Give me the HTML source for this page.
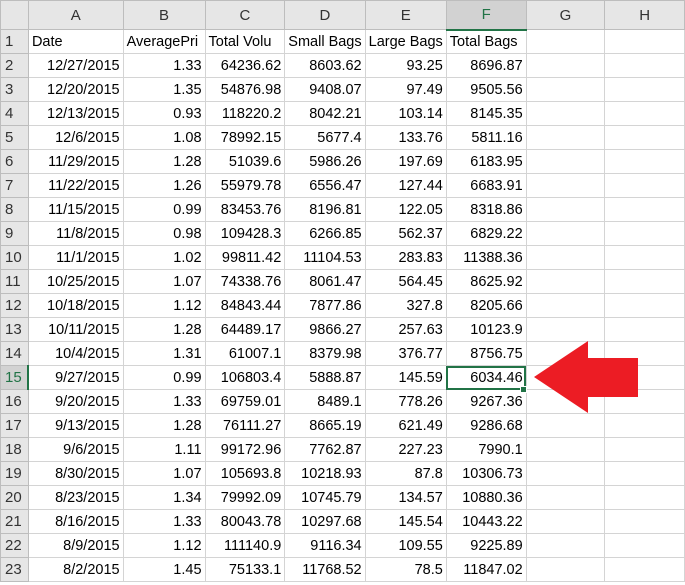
<!DOCTYPE html>
<html><head><meta charset="utf-8"><style>
body{margin:0;width:685px;height:585px;overflow:hidden;background:#fff;font-family:"Liberation Sans",Arial,sans-serif;position:relative}
table{border-collapse:collapse;table-layout:fixed;position:absolute;left:0;top:0}
td{border:1px solid #d4d4d4;height:24px;padding:0 3px;font-size:14.5px;color:#000;white-space:nowrap;overflow:hidden;text-align:right;box-sizing:border-box}
tr{height:24px}
td.l{text-align:left}
tr.h{height:29px}
tr.h td{height:29px;background:#e6e6e6;text-align:center;color:#333;font-size:15px;border-color:#bdbdbd}
td.r{background:#e6e6e6;text-align:left;padding-left:4px;color:#333;font-size:15px;border-color:#bdbdbd}
tr.h td.sel{background:#d2d2d2;color:#217346;border-bottom:2px solid #217346}
td.rsel{background:#d2d2d2;color:#217346;border-right:2px solid #217346}
td.cs{outline:2px solid #217346;outline-offset:-2px}
</style></head><body>
<table>
<colgroup><col style="width:28px"><col style="width:95px"><col style="width:82px"><col style="width:80px"><col style="width:80px"><col style="width:79px"><col style="width:80px"><col style="width:80px"><col style="width:81px"></colgroup>
<tr class="h"><td></td><td>A</td><td>B</td><td>C</td><td>D</td><td>E</td><td class="sel">F</td><td>G</td><td>H</td></tr>
<tr><td class="r">1</td><td class="l">Date</td><td class="l">AveragePri</td><td class="l">Total Volu</td><td class="l">Small Bags</td><td class="l">Large Bags</td><td class="l">Total Bags</td><td></td><td></td></tr>
<tr><td class="r">2</td><td>12/27/2015</td><td>1.33</td><td>64236.62</td><td>8603.62</td><td>93.25</td><td>8696.87</td><td></td><td></td></tr>
<tr><td class="r">3</td><td>12/20/2015</td><td>1.35</td><td>54876.98</td><td>9408.07</td><td>97.49</td><td>9505.56</td><td></td><td></td></tr>
<tr><td class="r">4</td><td>12/13/2015</td><td>0.93</td><td>118220.2</td><td>8042.21</td><td>103.14</td><td>8145.35</td><td></td><td></td></tr>
<tr><td class="r">5</td><td>12/6/2015</td><td>1.08</td><td>78992.15</td><td>5677.4</td><td>133.76</td><td>5811.16</td><td></td><td></td></tr>
<tr><td class="r">6</td><td>11/29/2015</td><td>1.28</td><td>51039.6</td><td>5986.26</td><td>197.69</td><td>6183.95</td><td></td><td></td></tr>
<tr><td class="r">7</td><td>11/22/2015</td><td>1.26</td><td>55979.78</td><td>6556.47</td><td>127.44</td><td>6683.91</td><td></td><td></td></tr>
<tr><td class="r">8</td><td>11/15/2015</td><td>0.99</td><td>83453.76</td><td>8196.81</td><td>122.05</td><td>8318.86</td><td></td><td></td></tr>
<tr><td class="r">9</td><td>11/8/2015</td><td>0.98</td><td>109428.3</td><td>6266.85</td><td>562.37</td><td>6829.22</td><td></td><td></td></tr>
<tr><td class="r">10</td><td>11/1/2015</td><td>1.02</td><td>99811.42</td><td>11104.53</td><td>283.83</td><td>11388.36</td><td></td><td></td></tr>
<tr><td class="r">11</td><td>10/25/2015</td><td>1.07</td><td>74338.76</td><td>8061.47</td><td>564.45</td><td>8625.92</td><td></td><td></td></tr>
<tr><td class="r">12</td><td>10/18/2015</td><td>1.12</td><td>84843.44</td><td>7877.86</td><td>327.8</td><td>8205.66</td><td></td><td></td></tr>
<tr><td class="r">13</td><td>10/11/2015</td><td>1.28</td><td>64489.17</td><td>9866.27</td><td>257.63</td><td>10123.9</td><td></td><td></td></tr>
<tr><td class="r">14</td><td>10/4/2015</td><td>1.31</td><td>61007.1</td><td>8379.98</td><td>376.77</td><td>8756.75</td><td></td><td></td></tr>
<tr><td class="r rsel">15</td><td>9/27/2015</td><td>0.99</td><td>106803.4</td><td>5888.87</td><td>145.59</td><td class="cs">6034.46</td><td></td><td></td></tr>
<tr><td class="r">16</td><td>9/20/2015</td><td>1.33</td><td>69759.01</td><td>8489.1</td><td>778.26</td><td>9267.36</td><td></td><td></td></tr>
<tr><td class="r">17</td><td>9/13/2015</td><td>1.28</td><td>76111.27</td><td>8665.19</td><td>621.49</td><td>9286.68</td><td></td><td></td></tr>
<tr><td class="r">18</td><td>9/6/2015</td><td>1.11</td><td>99172.96</td><td>7762.87</td><td>227.23</td><td>7990.1</td><td></td><td></td></tr>
<tr><td class="r">19</td><td>8/30/2015</td><td>1.07</td><td>105693.8</td><td>10218.93</td><td>87.8</td><td>10306.73</td><td></td><td></td></tr>
<tr><td class="r">20</td><td>8/23/2015</td><td>1.34</td><td>79992.09</td><td>10745.79</td><td>134.57</td><td>10880.36</td><td></td><td></td></tr>
<tr><td class="r">21</td><td>8/16/2015</td><td>1.33</td><td>80043.78</td><td>10297.68</td><td>145.54</td><td>10443.22</td><td></td><td></td></tr>
<tr><td class="r">22</td><td>8/9/2015</td><td>1.12</td><td>111140.9</td><td>9116.34</td><td>109.55</td><td>9225.89</td><td></td><td></td></tr>
<tr><td class="r">23</td><td>8/2/2015</td><td>1.45</td><td>75133.1</td><td>11768.52</td><td>78.5</td><td>11847.02</td><td></td><td></td></tr>
</table>
<div style="position:absolute;left:520px;top:386px;width:5px;height:5px;background:#217346;border:1px solid #fff"></div>
<svg style="position:absolute;left:0;top:0" width="685" height="585"><polygon points="534,377 588,341 588,358 638,358 638,397 588,397 588,413" fill="#ec1c24"/></svg>
</body></html>
